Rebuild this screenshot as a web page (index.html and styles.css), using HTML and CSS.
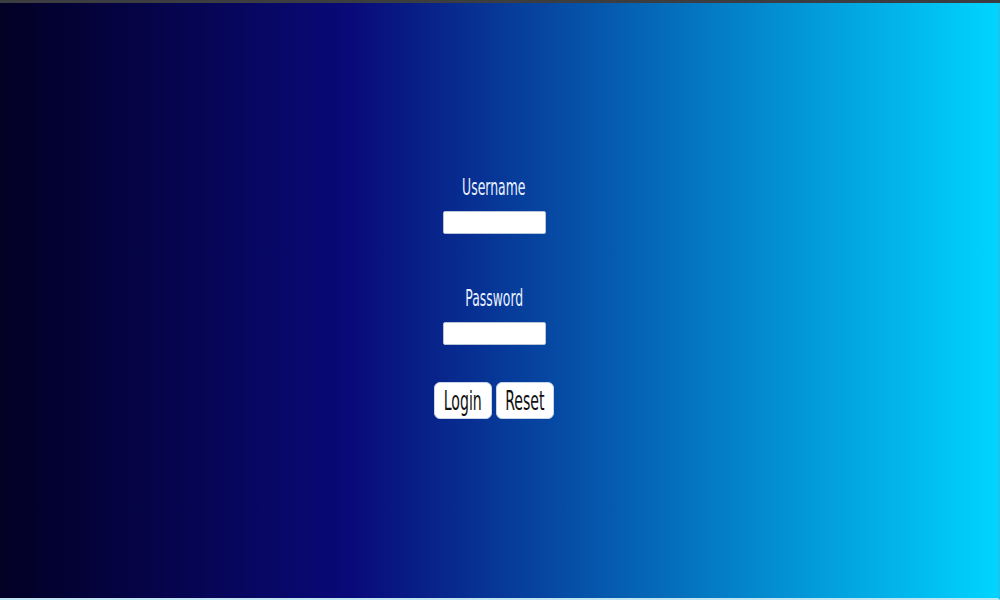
FILE: index.html
```html
<!DOCTYPE html>
<html>
<head>
<meta charset="utf-8">
<title>Login</title>
<link rel="stylesheet" href="styles.css">
</head>
<body>
<div class="topbar"></div>
<main class="page">
  <form class="login">
    <label class="field">
      <span class="label">Username</span>
      <input class="input" type="text">
    </label>
    <label class="field">
      <span class="label">Password</span>
      <input class="input" type="password">
    </label>
    <div class="actions">
      <button type="button" class="btn"><span class="btn-text">Login</span></button>
      <button type="reset" class="btn"><span class="btn-text">Reset</span></button>
    </div>
  </form>
</main>
</body>
</html>
```
FILE: styles.css
```css
html, body {
  margin: 0;
  padding: 0;
  height: 100%;
}
body {
  display: flex;
  flex-direction: column;
  background: #1c1c1c;
  font-family: "DejaVu Sans Condensed", "DejaVu Sans", sans-serif;
}
.topbar {
  height: 3px;
  background: #3b3d40;
  flex: none;
}
.page {
  flex: 1;
  background: linear-gradient(90deg, #020024 0%, #090979 35%, #00d4ff 100%);
  border-right: 2px solid #18c6ef;
  border-bottom: 2px solid #bfe6f2;
  display: flex;
  justify-content: center;
  padding-right: 10px;
}
.login {
  display: flex;
  flex-direction: column;
  align-items: center;
  padding-top: 170px;
}
.field {
  display: flex;
  flex-direction: column;
  align-items: center;
  margin-bottom: 50px;
}
.label {
  display: inline-block;
  color: #eaf1ff;
  font-size: 23px;
  line-height: 28px;
  margin-bottom: 10px;
  white-space: nowrap;
  transform: scaleX(0.6);
}
.input {
  width: 103px;
  height: 23px;
  box-sizing: border-box;
  border: 1px solid #b8c4d8;
  border-radius: 2px;
  background: #ffffff;
  padding: 0;
}
.actions {
  display: flex;
  gap: 4px;
  margin-top: -13px;
}
.btn {
  width: 58px;
  height: 37px;
  box-sizing: border-box;
  display: flex;
  align-items: center;
  justify-content: center;
  background: #ffffff;
  border: 1px solid #c9d3e6;
  border-radius: 6px;
  font-family: inherit;
  color: #111111;
  padding: 0;
  overflow: visible;
}
.btn-text {
  display: inline-block;
  font-size: 27px;
  line-height: 30px;
  white-space: nowrap;
  transform: scaleX(0.58);
}
```
